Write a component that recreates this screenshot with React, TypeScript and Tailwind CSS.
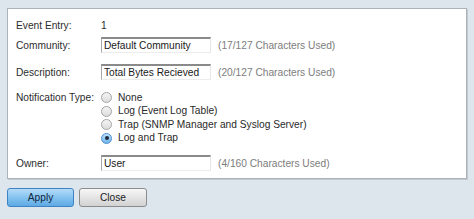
import React from "react";

const font = { fontFamily: '"Liberation Sans", Arial, sans-serif' };

function Field({ value }: { value: string }) {
  return (
    <div className="w-[110px] h-[16px] bg-white border-t-[2px] border-l border-r border-b border-t-[#8a8a8a] border-l-[#a8a8a8] border-r-[#e6e6e6] border-b-[#ececec] flex items-center pl-[2px] pt-[1px] text-[10.2px] text-[#1a1a1a] leading-none">
      {value}
    </div>
  );
}

function Radio({ checked, label }: { checked?: boolean; label: string }) {
  return (
    <div className="h-[13.5px] flex items-center">
      {checked ? (
        <div className="w-[11px] h-[11px] rounded-full border border-[#4a8fd0] bg-gradient-to-b from-[#bfe0fa] to-[#6fb4ec] flex items-center justify-center">
          <div className="w-[4px] h-[4px] rounded-full bg-[#1d2a3a]" />
        </div>
      ) : (
        <div className="w-[11px] h-[11px] rounded-full border border-[#a5a5a5] bg-gradient-to-b from-[#f4f4f4] to-[#dcdcdc]" />
      )}
      <span className="ml-[6px] text-[10.2px] text-[#2a2a2a] leading-none">{label}</span>
    </div>
  );
}

export default function App() {
  return (
    <div className="w-[474px] h-[219px] bg-[#dde6ed] pt-[8px] pl-[7px] overflow-hidden" style={font}>
      <div className="w-[460px] h-[171px] bg-white border border-[#aab3bb] shadow-[1px_1px_0_#c2cad1] pl-[8px] text-[10.2px] text-[#2d2d2d] leading-none">
        <div className="mt-[9px] h-[16px] flex items-center">
          <div className="w-[85px]">Event Entry:</div>
          <div>1</div>
        </div>
        <div className="mt-[3px] h-[16px] flex items-center">
          <div className="w-[85px] pt-[2px]">Community:</div>
          <Field value="Default Community" />
          <div className="ml-[7px] text-[#7d7d7d] pt-[2px]">(17/127 Characters Used)</div>
        </div>
        <div className="mt-[11px] h-[16px] flex items-center">
          <div className="w-[85px] pt-[2px]">Description:</div>
          <Field value="Total Bytes Recieved" />
          <div className="ml-[7px] text-[#7d7d7d] pt-[2px]">(20/127 Characters Used)</div>
        </div>
        <div className="mt-[11px] flex">
          <div className="w-[85px] h-[13.5px] flex items-center">Notification Type:</div>
          <div className="flex flex-col">
            <Radio label="None" />
            <Radio label="Log (Event Log Table)" />
            <Radio label="Trap (SNMP Manager and Syslog Server)" />
            <Radio checked label="Log and Trap" />
          </div>
        </div>
        <div className="mt-[10px] h-[16px] flex items-center">
          <div className="w-[85px] pt-[2px]">Owner:</div>
          <Field value="User" />
          <div className="ml-[7px] text-[#7d7d7d] pt-[2px]">(4/160 Characters Used)</div>
        </div>
      </div>
      <div className="mt-[9px] flex gap-[5px]">
        <button className="w-[67px] h-[19px] pt-[1px] rounded-[3px] border border-[#3f83c4] bg-gradient-to-b from-[#b5dbf7] via-[#84c3f0] to-[#5ea9e4] text-[10.2px] text-[#10243a] leading-none flex items-center justify-center">
          Apply
        </button>
        <button className="w-[68px] h-[19px] pt-[1px] rounded-[3px] border border-[#8c8c8c] bg-gradient-to-b from-[#f7f7f7] to-[#d2d2d2] text-[10.2px] text-[#222] leading-none flex items-center justify-center">
          Close
        </button>
      </div>
    </div>
  );
}
